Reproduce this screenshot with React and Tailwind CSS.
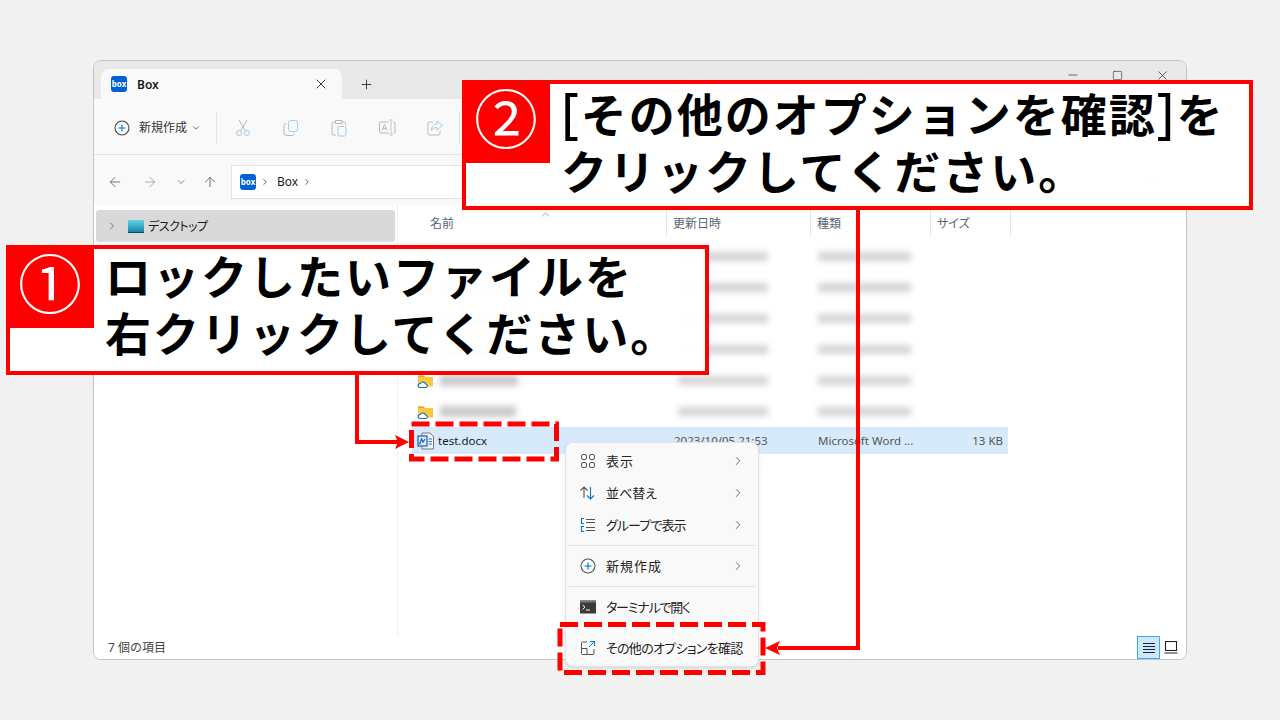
import React from 'react';
import {
  ArrowLeft, ArrowRight, ArrowUp, ChevronDown, ChevronRight, ChevronUp, Plus, RotateCw,
  Search, X, Minus, Square, ArrowUpDown, MoreHorizontal, LayoutGrid,
} from 'lucide-react';

const jp = { fontFamily: '"Noto Sans", "Noto Sans CJK JP", sans-serif' };

const BoxLogo = () => (
  <div className="w-4 h-4 rounded-[3px] bg-[#0061d5] flex items-center justify-center">
    <span className="text-white text-[8px] leading-none font-bold">box</span>
  </div>
);

const Folder = () => (
  <svg width="17" height="16" viewBox="0 0 17 16">
    <path d="M1 2.500h5.500l1.500 1.500h8v9.500H1z" fill="#fbc93d" />
    <path d="M1 2.500h5.500l1.500 1.500H1z" fill="#e8a317" />
    <path d="M3 14.500a2 2 0 0 1 .3-4 3 3 0 0 1 5.400.5 1.800 1.800 0 0 1 .3 3.500z" fill="#fff" stroke="#1b6ec2" strokeWidth="1.200" />
  </svg>
);

const WordFile = () => (
  <svg width="18" height="18" viewBox="0 0 18 18">
    <path d="M5 1h8l3.500 3.500V17H5z" fill="#f4f4f4" stroke="#777" />
    <rect x="1" y="4" width="9" height="10" fill="#dce9f7" stroke="#1d5fb8" strokeWidth="1.200" />
    <path d="M2.500 12.500 4.500 7l1.500 3 2-3" fill="none" stroke="#1d5fb8" strokeWidth="1.200" />
    <path d="M11.500 7h3.500M11.500 9.500h3.500M11.500 12h3.500" stroke="#2b78d0" />
  </svg>
);

const rows = [
  { name: 'w-[82px]' },
  { name: 'w-[70px]' },
  { name: 'w-[76px]' },
  { name: 'w-[64px]' },
  { name: 'w-[78px]' },
  { name: 'w-[76px]' },
];

const menuItems = [
  {
    label: '表示',
    track: 'tracking-[1px]',
    arrow: true,
    icon: (
      <svg width="16" height="16" viewBox="0 0 16 16" fill="none" stroke="#555" strokeWidth="1">
        <rect x="1.500" y="1.500" width="5" height="5" rx="1.500" />
        <rect x="9.500" y="1.500" width="5" height="5" rx="1.500" />
        <rect x="1.500" y="9.500" width="5" height="5" rx="1.500" />
        <rect x="9.500" y="9.500" width="5" height="5" rx="1.500" />
      </svg>
    ),
  },
  {
    label: '並べ替え',
    track: 'tracking-[0px]',
    arrow: true,
    icon: (
      <svg width="17" height="16" viewBox="0 0 17 16" fill="none" strokeWidth="1.100">
        <path d="M5 13V2M1.500 5.500 5 2l3.500 3.500" stroke="#555" />
        <path d="M11.500 2v12M8 10.500l3.500 3.500 3.500-3.500" stroke="#0078d4" />
      </svg>
    ),
  },
  {
    label: 'グループで表示',
    track: 'tracking-[-0.900px]',
    arrow: true,
    icon: (
      <svg width="16" height="16" viewBox="0 0 16 16" fill="none" strokeWidth="1.100">
        <path d="M4 1.500H1.500v5H4M4 9.500H1.500v5H4" stroke="#0078d4" />
        <path d="M6 2.500h9M6 5.500h9M6 10.500h9M6 13.500h9" stroke="#555" />
      </svg>
    ),
  },
  { divider: true },
  {
    label: '新規作成',
    track: 'tracking-[1px]',
    arrow: true,
    icon: (
      <svg width="16" height="16" viewBox="0 0 16 16" fill="none" strokeWidth="1.100">
        <circle cx="8" cy="8" r="7" stroke="#555" />
        <path d="M8 4.500v7M4.500 8h7" stroke="#0078d4" />
      </svg>
    ),
  },
  { divider: true },
  {
    label: 'ターミナルで開く',
    track: 'tracking-[-1.200px]',
    icon: (
      <svg width="16" height="14" viewBox="0 0 16 14">
        <rect width="16" height="13" y="0.500" fill="#3a3a3a" />
        <rect width="16" height="2" y="0.500" fill="#777" />
        <path d="M2.500 5 5 7.200 2.500 9.500" fill="none" stroke="#fff" />
        <path d="M6 10h4" stroke="#fff" />
      </svg>
    ),
  },
  {
    label: 'その他のオプションを確認',
    track: 'tracking-[-0.700px]',
    gapTop: true,
    icon: (
      <svg width="16" height="16" viewBox="0 0 16 16" fill="none" strokeWidth="1">
        <path d="M7 2H2.500a1 1 0 0 0-1 1v10.500a1 1 0 0 0 1 1H13a1 1 0 0 0 1-1V9M1.500 8.500H7v6" stroke="#555" />
        <path d="M9 7l5.500-5.500M10 1.500h4.500V6" stroke="#0078d4" />
      </svg>
    ),
  },
];

const Callout = ({ num, children, className }) => (
  <div className={`absolute border-4 border-[#ff0000] bg-white/95 flex items-start ${className}`}>
    <div className="w-[88px] h-[83px] -ml-1 -mt-1 pb-[5px] shrink-0 bg-[#ff0000] flex items-center justify-center">
      <span className="text-white text-[64px] leading-none font-normal">{num}</span>
    </div>
    <div className="pl-[11px] -mt-[1px] text-black text-[46px] leading-[57px] font-bold tracking-[2px] whitespace-nowrap">
      {children}
    </div>
  </div>
);

export default function App() {
  return (
    <div className="relative w-[1280px] h-[720px] overflow-hidden bg-[#f1f1f1] pt-[60px] pl-[93px] text-[#1a1a1a]" style={jp}>
      {/* explorer window */}
      <div className="w-[1094px] h-[600px] rounded-lg border border-[#c4c4c4] bg-white overflow-hidden flex flex-col">
        {/* tabs */}
        <div className="h-[38px] shrink-0 bg-[#e9e9e9] flex items-end pl-[7px]">
          <div className="w-[241px] h-[30px] bg-[#f9f9f9] rounded-t-lg flex items-center pl-[10px] pr-[13px]">
            <BoxLogo />
            <span className="ml-[10px] text-xs font-semibold flex-1 pt-[2px]">Box</span>
            <X size={16} strokeWidth={1.300} />
          </div>
          <div className="h-[30px] w-[48px] flex items-center justify-center">
            <Plus size={15} strokeWidth={1.300} />
          </div>
          <div className="flex-1" />
          <div className="self-start flex items-center h-[28px] pr-4 gap-[32px] text-[#333]">
            <Minus size={14} strokeWidth={1.200} />
            <Square size={11} strokeWidth={1.400} />
            <X size={15} strokeWidth={1.200} />
          </div>
        </div>
        {/* toolbar */}
        <div className="h-[56px] shrink-0 bg-[#f9f9f9] border-b border-[#e4e4e4] flex items-center pl-5 pt-[2px]">
          <svg width="16" height="16" viewBox="0 0 16 16" fill="none" strokeWidth="1.100">
            <circle cx="8" cy="8" r="7" stroke="#444" />
            <path d="M8 4.500v7M4.500 8h7" stroke="#0078d4" />
          </svg>
          <span className="ml-[9px] text-xs text-[#333]">新規作成</span>
          <ChevronDown size={10} className="ml-[4px] text-[#555]" />
          <div className="w-px h-8 bg-[#e2e2e2] ml-[15px] mr-[17px]" />
          <div className="flex items-center gap-[30px]">
            <svg width="18" height="18" viewBox="0 0 18 18" fill="none" strokeWidth="1">
              <path d="M5 1l6.500 11M13 1 6.500 12" stroke="#b9b9b9" />
              <circle cx="5" cy="14" r="2.500" stroke="#a5cbe8" />
              <circle cx="13" cy="14" r="2.500" stroke="#a5cbe8" />
            </svg>
            <svg width="18" height="18" viewBox="0 0 18 18" fill="none" strokeWidth="1">
              <rect x="6.500" y="1.500" width="9" height="11" rx="2" stroke="#a5cbe8" />
              <path d="M4.500 4.500h-.5a2 2 0 0 0-2 2v7a3 3 0 0 0 3 3h5a2 2 0 0 0 2-2" stroke="#b9b9b9" />
            </svg>
            <svg width="18" height="18" viewBox="0 0 18 18" fill="none" strokeWidth="1">
              <path d="M5.500 3H3.500a1.500 1.500 0 0 0-1.500 1.500v10a1.500 1.500 0 0 0 1.500 1.500H6M12 3h2a1.500 1.500 0 0 1 1.500 1.500V6M5.500 1.500h6.500v3H5.500z" stroke="#b9b9b9" />
              <rect x="8" y="7.500" width="8" height="9.500" rx="1.500" stroke="#a5cbe8" />
            </svg>
            <svg width="18" height="18" viewBox="0 0 18 18" fill="none" strokeWidth="1">
              <path d="M11 3H2.500a1 1 0 0 0-1 1v9a1 1 0 0 0 1 1H11M15 3h1a1 1 0 0 1 1 1v9a1 1 0 0 1-1 1h-1" stroke="#b9b9b9" />
              <path d="M4 11.500 6.500 5.500 9 11.500M5 9.500h3" stroke="#b9b9b9" />
              <path d="M13 1.500v14M11.500 1h3M11.500 16h3" stroke="#a5cbe8" />
            </svg>
            <svg width="18" height="18" viewBox="0 0 18 18" fill="none" strokeWidth="1">
              <path d="M7 3H3.500A1.500 1.500 0 0 0 2 4.500v10A1.500 1.500 0 0 0 3.500 16h9a1.500 1.500 0 0 0 1.500-1.500V12" stroke="#b9b9b9" />
              <path d="M11 2l5.500 4.500L11 11V8.500c-3 0-4.500 1-5.500 3 0-4 2-6.500 5.500-6.500z" stroke="#a5cbe8" />
            </svg>
          </div>
          <div className="w-px h-8 bg-[#e2e2e2] ml-[15px]" />
          <ArrowUpDown size={16} strokeWidth={1.200} className="ml-[60px] text-[#888]" />
          <span className="ml-[6px] text-xs text-[#888] [font-feature-settings:'palt']">並べ替え</span>
          <ChevronDown size={10} className="ml-1 text-[#888]" />
          <LayoutGrid size={16} strokeWidth={1.200} className="ml-[34px] text-[#888]" />
          <span className="ml-[7px] text-xs text-[#888]">表示</span>
          <ChevronDown size={10} className="ml-1 text-[#888]" />
          <div className="w-px h-8 bg-[#e2e2e2] ml-[11px]" />
          <MoreHorizontal size={16} className="ml-[18px] text-[#888]" />
        </div>
        {/* address bar */}
        <div className="h-[50px] shrink-0 bg-[#f9f9f9] flex items-center pl-[13px] pr-[13px] pt-[4px]">
          <ArrowLeft size={16} strokeWidth={1.200} className="text-[#555]" />
          <ArrowRight size={16} strokeWidth={1.200} className="ml-[19px] text-[#999]" />
          <ChevronDown size={12} strokeWidth={1.400} className="ml-[17px] text-[#555]" />
          <ArrowUp size={16} strokeWidth={1.200} className="ml-[15px] text-[#555]" />
          <div className="ml-[13px] h-[34px] w-[640px] bg-white border border-[#e3e3e3] flex items-center pl-2 pr-2">
            <BoxLogo />
            <ChevronRight size={10} className="ml-[4px] text-[#444]" />
            <span className="ml-[7px] text-xs">Box</span>
            <ChevronRight size={10} className="ml-[4px] text-[#444]" />
            <div className="flex-1" />
            <ChevronDown size={12} className="text-[#888]" />
            <RotateCw size={12} className="ml-4 text-[#888]" />
          </div>
          <div className="ml-[10px] h-[34px] flex-1 bg-white border border-[#e3e3e3] flex items-center justify-end pr-[14px]">
            <Search size={13} strokeWidth={1.300} className="text-[#888] -scale-x-100" />
          </div>
        </div>
        {/* main */}
        <div className="flex-1 flex min-h-0 bg-white">
          <div className="w-[304px] shrink-0 border-r border-[#efefef] pl-[2px] pt-[5px]">
            <div className="w-[299px] h-[32px] bg-[#d9d9d9] rounded-[3px] flex items-center pl-[10px]">
              <ChevronRight size={12} className="text-[#777]" />
              <div className="ml-[10px] w-4 h-[13px] bg-gradient-to-b from-[#5fd4e4] to-[#0f86a8] border-b border-[#0b4f66]" />
              <span className="ml-1 text-xs pt-[2px] tracking-[-0.500px] [font-feature-settings:'palt']">デスクトップ</span>
            </div>
          </div>
          <div className="flex-1 min-w-0 pl-[14px] pt-[5px]">
            <div className="relative h-[26px] w-[600px] flex text-xs text-[#566573] items-center [font-feature-settings:'palt']">
              <ChevronUp size={13} strokeWidth={1.200} className="absolute left-[127px] -top-[2px] text-[#777]" />
              <span className="w-[255px] pl-[18px] border-r border-[#e5e5e5] h-full leading-[28px]">名前</span>
              <span className="w-[144px] pl-[6px] border-r border-[#e5e5e5] h-full leading-[28px]">更新日時</span>
              <span className="w-[120px] pl-[6px] border-r border-[#e5e5e5] h-full leading-[28px]">種類</span>
              <span className="w-[80px] pl-[6px] border-r border-[#e5e5e5] h-full leading-[28px]">サイズ</span>
            </div>
            <div className="pt-[5px]">
              {rows.map((r, i) => (
                <div key={i} className="h-[31px] flex items-center w-[596px]">
                  <div className="ml-[5px] w-[17px]">
                    <Folder />
                  </div>
                  <div className={`ml-[6px] h-[11px] ${r.name} bg-[#c9c9c9] blur-[3px]`} />
                  <div className="flex-1" />
                  <div className="h-[9px] w-[90px] bg-[#d4d4d4] blur-[3px] mr-[50px]" />
                  <div className="h-[9px] w-[93px] bg-[#d4d4d4] blur-[3px] mr-[97px]" />
                </div>
              ))}
              <div className="h-[27px] w-[596px] bg-[#d6eafb] flex items-center text-[11.500px]">
                <div className="ml-[5px] w-[18px]">
                  <WordFile />
                </div>
                <span className="ml-[3px] w-[236px]">test.docx</span>
                <span className="w-[144px] text-[#555]">2023/10/05 21:53</span>
                <span className="w-[100px] text-[#555] whitespace-nowrap overflow-hidden">Microsoft Word ...</span>
                <span className="w-[85px] text-right text-[#555]">13 KB</span>
              </div>
            </div>
          </div>
        </div>
        {/* status bar */}
        <div className="h-[23px] shrink-0 bg-white flex items-center pl-[14px] pr-[4px] text-xs text-[#444]">
          <span className="flex-1">7 個の項目</span>
          <div className="w-[23px] h-[23px] bg-[#cce8ff] border border-[#40a9e8] flex items-center justify-center">
            <svg width="14" height="12" viewBox="0 0 14 12" stroke="#222" strokeWidth="1.200">
              <path d="M1 1.500h12M1 4.500h12M1 7.500h12M1 10.500h12" />
            </svg>
          </div>
          <div className="w-[22px] h-[23px] flex items-center justify-center">
            <svg width="14" height="13" viewBox="0 0 14 13" fill="none" stroke="#222" strokeWidth="1.100">
              <rect x="1.500" y="0.500" width="11" height="9" />
              <path d="M0.500 12h13" />
            </svg>
          </div>
        </div>
      </div>

      {/* context menu */}
      <div className="absolute left-[565px] top-[442px] w-[194px] h-[225px] rounded-lg bg-[#f9f9f9] border border-[#e4e4e4] shadow-sm px-[3px] pt-[2px] text-[13px] leading-none text-[#222] [font-feature-settings:'palt']">
        {menuItems.map((item, i) =>
          item.divider ? (
            <div key={i} className="h-px bg-[#e3e3e3] my-[4px]" />
          ) : (
            <div key={i} className={`h-[32px] flex items-center pl-[10px] pr-[10px] ${item.gapTop ? 'mt-[9px]' : ''}`}>
              <span className="w-[17px] flex justify-center shrink-0">{item.icon}</span>
              <span className={`ml-[10px] flex-1 whitespace-nowrap ${item.track}`}>{item.label}</span>
              {item.arrow && <ChevronRight size={14} strokeWidth={1.300} className="text-[#444]" />}
            </div>
          )
        )}
      </div>

      {/* annotations */}
      <svg className="absolute left-0 top-0" width="1280" height="720" viewBox="0 0 1280 720" fill="none">
        <rect x="411.500" y="424" width="145" height="35" stroke="#ff0000" strokeWidth="5" strokeDasharray="18 6" />
        <rect x="560" y="624.500" width="203" height="48" stroke="#ff0000" strokeWidth="5" strokeDasharray="18 6" />
        <path d="M357 375V442H398" stroke="#ff0000" strokeWidth="4" />
        <path d="M395 435l14 7-14 7 3-7z" fill="#ff0000" />
        <path d="M858 210V648H778" stroke="#ff0000" strokeWidth="4" />
        <path d="M780 641l-15 7 15 7-3-7z" fill="#ff0000" />
      </svg>

      <Callout num="①" className="left-[6px] top-[245px] w-[703px] h-[130px]">
        <div>ロックしたいファイルを</div>
        <div>右クリックしてください。</div>
      </Callout>
      <Callout num="②" className="left-[462px] top-[80px] w-[791px] h-[130px]">
        <div>
          <span className="font-normal text-[54px] leading-[57px]">[</span>その他のオプションを確認<span className="font-normal text-[54px] leading-[57px]">]</span>を
        </div>
        <div>クリックしてください。</div>
      </Callout>
    </div>
  );
}
